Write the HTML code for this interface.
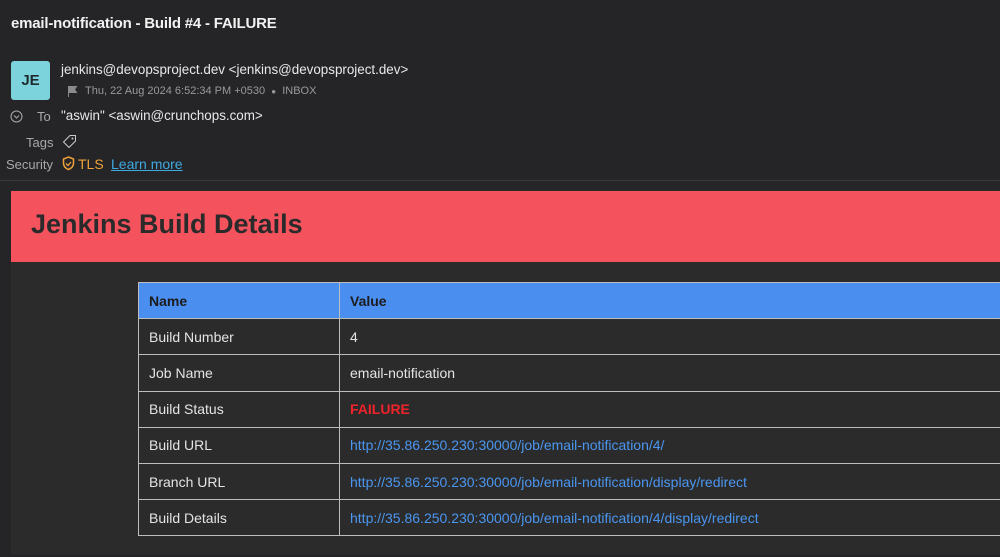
<!DOCTYPE html>
<html><head><style>
*{margin:0;padding:0;box-sizing:border-box}
body{width:1000px;height:557px;overflow:hidden;background:#252528;font-family:"Liberation Sans",sans-serif;color:#e6e6e6;position:relative}
.a{position:absolute;white-space:nowrap}
.lbl{color:#a8a8a8;font-size:13px}
table{position:absolute;left:138px;top:282px;border-collapse:collapse;font-size:14px;table-layout:fixed;width:1000px}
td{border:1px solid #bdbdbd;height:36.2px;padding:0 10px;color:#e4e4e4;white-space:nowrap}
tr.h td{background:#4a8ef0;color:#1c1c1c;font-weight:bold}
a{color:#4a96f0;text-decoration:none}
</style></head><body>
<div class="a" style="left:11px;top:15px;font-size:15px;font-weight:bold;color:#f2f2f2;letter-spacing:-0.2px">email-notification - Build #4 - FAILURE</div>
<div class="a" style="left:11px;top:61px;width:39px;height:39px;background:#7dd3dc;border-radius:3px;color:#1e2a2e;font-weight:bold;font-size:15px;text-align:center;line-height:39px">JE</div>
<div class="a" style="left:61px;top:62px;font-size:13.4px;color:#e8e8e8">jenkins@devopsproject.dev &lt;jenkins@devopsproject.dev&gt;</div>
<svg class="a" style="left:67px;top:85px" width="11" height="12"><path d="M1.5 1v11M1.5 1.5h8l-2 3 2 3h-8" fill="#8a8a8a" stroke="#8a8a8a"/></svg>
<div class="a" style="left:85px;top:85px;font-size:11px;color:#9a9a9a">Thu, 22 Aug 2024 6:52:34 PM +0530 &nbsp;<span style="font-size:8px">●</span>&nbsp; INBOX</div>
<svg class="a" style="left:10px;top:110px" width="13" height="13"><circle cx="6.5" cy="6.5" r="5.5" fill="none" stroke="#aaa"/><path d="M4 5.5l2.5 2.5 2.5-2.5" fill="none" stroke="#aaa"/></svg>
<div class="a lbl" style="left:37px;top:109px">To</div>
<div class="a" style="left:61px;top:108px;font-size:13.4px;color:#e8e8e8">"aswin" &lt;aswin@crunchops.com&gt;</div>
<div class="a lbl" style="left:26px;top:135px">Tags</div>
<svg class="a" style="left:62px;top:134px" width="15" height="15"><path d="M8 1.5h5.5v5.5l-6.5 6.5-5.5-5.5z" fill="none" stroke="#ccc" stroke-linejoin="round"/><circle cx="10.5" cy="4.5" r="1" fill="#ccc"/></svg>
<div class="a lbl" style="left:6px;top:157px">Security</div>
<svg class="a" style="left:62px;top:156px" width="13" height="15"><path d="M6.5 1l5 2v4c0 3.5-2.5 5.5-5 6.5-2.5-1-5-3-5-6.5v-4z" fill="none" stroke="#f0a13a" stroke-width="1.5"/><path d="M4 7.5l2 2 3-3.5" fill="none" stroke="#f0a13a" stroke-width="1.3"/></svg>
<div class="a" style="left:78px;top:156px;font-size:14px;color:#f0a13a">TLS</div>
<div class="a" style="left:111px;top:156px;font-size:14px;color:#3fa9e0;text-decoration:underline">Learn more</div>
<div class="a" style="left:0;top:180px;width:1000px;height:1px;background:#3a3a3c"></div>
<div class="a" style="left:11px;top:190px;width:989px;height:365px;background:#2b2b2b"></div>
<div class="a" style="left:11px;top:191px;width:989px;height:71px;background:#f4535e"></div>
<div class="a" style="left:31px;top:209px;font-size:27px;font-weight:bold;color:#2a2a2a">Jenkins Build Details</div>
<table>
<colgroup><col style="width:201px"><col style="width:799px"></colgroup>
<tr class="h"><td>Name</td><td>Value</td></tr>
<tr><td>Build Number</td><td>4</td></tr>
<tr><td>Job Name</td><td>email-notification</td></tr>
<tr><td>Build Status</td><td style="color:#f0222a;font-weight:bold">FAILURE</td></tr>
<tr><td>Build URL</td><td><a>http://35.86.250.230:30000/job/email-notification/4/</a></td></tr>
<tr><td>Branch URL</td><td><a>http://35.86.250.230:30000/job/email-notification/display/redirect</a></td></tr>
<tr><td>Build Details</td><td><a>http://35.86.250.230:30000/job/email-notification/4/display/redirect</a></td></tr>
</table>
</body></html>
